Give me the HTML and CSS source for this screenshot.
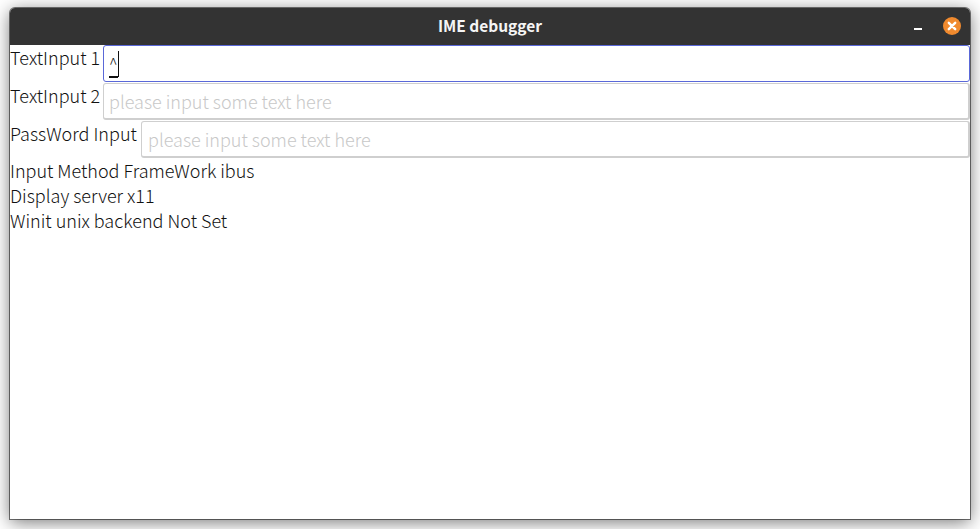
FILE: index.html
```html
<!DOCTYPE html>
<html lang="en">
<head>
    <meta charset="UTF-8">
    <meta name="viewport" content="width=device-width, initial-scale=1.0">
    <title>IME debugger</title>
    <link rel="stylesheet" href="styles.css">
</head>
<body>
    <div class="window">
        <div class="titlebar">
            <span class="title">IME debugger</span>
            <div class="controls">
                <span class="minimize"></span>
                <span class="close">
                    <svg width="18" height="18" viewBox="0 0 18 18">
                        <circle cx="9" cy="9" r="9" fill="#f08a2e"></circle>
                        <path d="M5.8 5.8 L12.2 12.2 M12.2 5.8 L5.8 12.2" stroke="#fff" stroke-width="2.4" stroke-linecap="round"></path>
                    </svg>
                </span>
            </div>
        </div>
        <div class="content">
            <div class="row">
                <label>TextInput 1</label>
                <div class="input focused"><span class="preedit">^</span><span class="caret"></span></div>
            </div>
            <div class="row">
                <label>TextInput 2</label>
                <div class="input placeholder">please input some text here</div>
            </div>
            <div class="row">
                <label class="wide">PassWord Input</label>
                <div class="input placeholder password">please input some text here</div>
            </div>
            <div class="info">
                <p>Input Method FrameWork ibus</p>
                <p>Display server x11</p>
                <p>Winit unix backend Not Set</p>
            </div>
        </div>
    </div>
</body>
</html>
```

FILE: styles.css
```css
body {
    margin: 0;
    height: 529px;
    padding: 8px 10px 10px;
    box-sizing: border-box;
    overflow: hidden;
    background-color: #ffffff;
    font-family: "Noto Sans CJK SC", "Noto Sans", sans-serif;
    font-weight: 300;
    font-size: 18px;
    color: #111111;
}

.window {
    height: 511px;
    display: flex;
    flex-direction: column;
    border-radius: 5px 5px 0 0;
    background-color: #ffffff;
    box-shadow: 0 3px 18px rgba(0, 0, 0, 0.55), 0 0 0 1px rgba(70, 70, 70, 0.7);
}

.titlebar {
    height: 37px;
    flex-shrink: 0;
    display: flex;
    align-items: center;
    justify-content: center;
    position: relative;
    background-color: #333333;
    border-radius: 5px 5px 0 0;
}

.title {
    color: #f5f5f5;
    font-size: 15.5px;
    font-weight: 700;
    margin-top: -3px;
}

.controls {
    position: absolute;
    right: 9px;
    top: 9px;
    display: flex;
    align-items: center;
    gap: 21px;
}

.minimize {
    width: 8px;
    height: 2px;
    margin-top: 5px;
    background-color: #ffffff;
}

.close {
    width: 18px;
    height: 18px;
}

.close svg {
    display: block;
}

.content {
    flex: 1;
    display: flex;
    flex-direction: column;
}

.row {
    display: flex;
    height: 38px;
}

label {
    width: 93px;
    flex-shrink: 0;
    line-height: 25px;
    white-space: nowrap;
}

label.wide {
    width: 131px;
}

.input {
    flex: 1;
    height: 37px;
    box-sizing: border-box;
    display: flex;
    align-items: center;
    padding-left: 5px;
    border: 2px solid #cfcfcf;
    border-top-width: 1px;
    border-left-width: 1px;
    border-radius: 3px;
}

.placeholder {
    color: #c8c8c8;
}

.password {
    padding-left: 6px;
}

.focused {
    border: 1px solid #5a68d8;
}

.preedit {
    font-size: 16px;
    line-height: 26px;
    border-bottom: 2px solid #111111;
}

.caret {
    width: 1px;
    height: 26px;
    background-color: #111111;
}

.info p {
    margin: 0;
    line-height: 25px;
}

.info {
    margin-top: -1px;
}
```
